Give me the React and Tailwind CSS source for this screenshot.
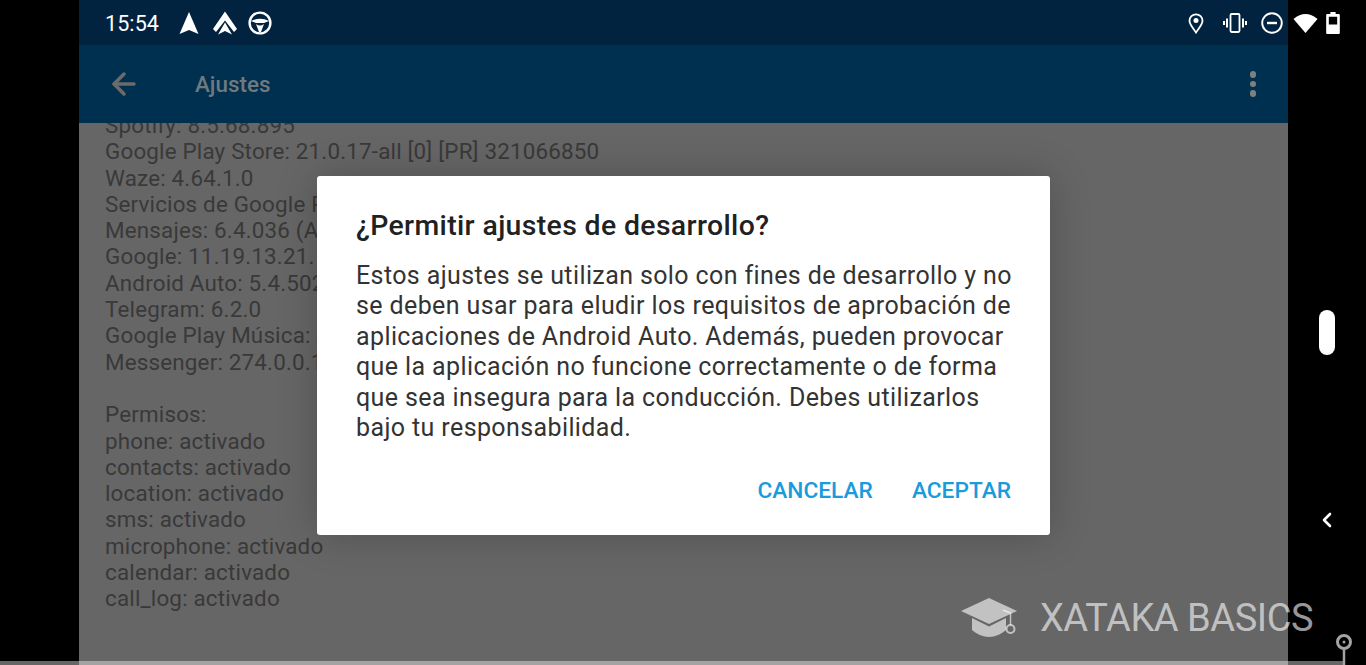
import React from 'react';
import { ArrowLeft, ChevronLeft } from 'lucide-react';

// the dialog hides the end of the longer lines, so they stop where it starts
const APPS = [
  'Spotify: 8.5.68.895',
  'Google Play Store: 21.0.17-all [0] [PR] 321066850',
  'Waze: 4.64.1.0',
  'Servicios de Google P',
  'Mensajes: 6.4.036 (A',
  'Google: 11.19.13.21.',
  'Android Auto: 5.4.502',
  'Telegram: 6.2.0',
  'Google Play Música: 4',
  'Messenger: 274.0.0.1',
];

const PERMS = ['phone', 'contacts', 'location', 'sms', 'microphone', 'calendar', 'call_log'];

function StatusLeft() {
  return (
    <div className="flex items-center">
      <span className="text-[21.5px] leading-none mt-[2px] text-white tracking-[0.1px]">15:54</span>
      <svg width="20" height="24" viewBox="0 0 20 24" className="ml-[20px]" fill="#fff">
        <path d="M10 1 L19.5 23 L10 19 L0.5 23 Z" />
      </svg>
      <svg width="24" height="24" viewBox="0 0 24 24" className="ml-[14px]" fill="#fff">
        <path d="M12 0.5 L24 18 L21 21 L12 9.5 L3 21 L0 18 Z" />
        <path d="M12 11.5 L19 23.5 L12 20 L5 23.5 Z" />
      </svg>
      <svg width="24" height="24" viewBox="0 0 24 24" className="ml-[11px]" fill="none">
        <circle cx="12" cy="12" r="10.4" stroke="#fff" strokeWidth="2.4" />
        <path d="M3 10 Q12 5.5 21 10 L16 12 H8 Z" fill="#fff" />
        <path d="M8 13 L11 21 H13 L16 13 Q12 16 8 13 Z" fill="#fff" />
      </svg>
    </div>
  );
}

function StatusRight() {
  return (
    <div className="flex items-center">
      <svg width="16" height="21" viewBox="0 0 16 21" fill="none">
        <path d="M8 19.5 C5 15 1.5 11.5 1.5 7.8 A6.5 6.5 0 0 1 14.5 7.8 C14.5 11.5 11 15 8 19.5 Z" stroke="#fff" strokeWidth="1.8" />
        <circle cx="8" cy="7.6" r="2.5" fill="#fff" />
      </svg>
      <svg width="24" height="20" viewBox="0 0 24 20" className="ml-[19px]" fill="none">
        <rect x="7.5" y="1" width="9" height="18" rx="1.2" stroke="#fff" strokeWidth="1.8" />
        <path d="M4 5.5 V14.5 M1 8 V12 M20 5.5 V14.5 M23 8 V12" stroke="#fff" strokeWidth="2" />
      </svg>
      <svg width="22" height="22" viewBox="0 0 22 22" className="ml-[14px]" fill="none">
        <circle cx="11" cy="11" r="9.8" stroke="#fff" strokeWidth="1.9" />
        <path d="M6 11 H16" stroke="#fff" strokeWidth="2.4" />
      </svg>
      <svg width="25" height="22" viewBox="0 0 25 22" className="ml-[10px]" fill="#fff">
        <path d="M12.5 21 L0.5 7 Q12.5 -3 24.5 7 Z" />
      </svg>
      <svg width="14" height="22" viewBox="0 0 13 21" className="ml-[8px]" fill="#fff">
        <path fillRule="evenodd" d="M4 0 H9 V2 H12 A1 1 0 0 1 13 3 V20 A1 1 0 0 1 12 21 H1 A1 1 0 0 1 0 20 V3 A1 1 0 0 1 1 2 H4 Z M2.5 4.5 V12 H10.5 V4.5 Z" />
      </svg>
    </div>
  );
}

function Watermark() {
  return (
    <div className="flex items-center text-white/60">
      <svg width="58" height="42" viewBox="0 0 58 42" fill="#ffffff" fillOpacity="0.6">
        <path d="M29 1 L57 14 L29 27 L1 14 Z" />
        <path d="M12 21 L29 29.5 L46 21 V33 Q38 40 29 40 Q20 40 12 33 Z" />
        <path d="M43 13 L50.5 16 V28" stroke="#ffffff" strokeOpacity="0.6" strokeWidth="1.5" fill="none" />
        <circle cx="50.5" cy="32" r="4" fill="none" stroke="#ffffff" strokeOpacity="0.6" strokeWidth="2" />
      </svg>
      <span className="ml-[22px] text-[38px] leading-none tracking-[-0.45px] font-['Roboto',sans-serif]">XATAKA BASICS</span>
    </div>
  );
}

export default function App() {
  return (
    <div className="relative flex h-[665px] w-[1366px] overflow-hidden bg-black font-['Roboto',sans-serif]">
      <div className="w-[79px] shrink-0" />

      <div className="flex w-[1209px] shrink-0 flex-col bg-[#666666]">
        <div className="flex h-[45px] shrink-0 items-center bg-[#012340] pl-[26px]">
          <StatusLeft />
        </div>
        <div className="flex h-[78px] shrink-0 items-center bg-[#00304f] pl-[28px] pr-[32px]">
          <ArrowLeft size={34} strokeWidth={2.5} className="text-[#6b6b6b]" />
          <span className="ml-[54px] mt-[2px] text-[22.4px] font-medium text-[#6f7a80]">Ajustes</span>
          <div className="ml-auto flex flex-col gap-[3px]">
            <div className="h-[6.5px] w-[6.5px] rounded-full bg-[#7f7f7f]" />
            <div className="h-[6.5px] w-[6.5px] rounded-full bg-[#7f7f7f]" />
            <div className="h-[6.5px] w-[6.5px] rounded-full bg-[#7f7f7f]" />
          </div>
        </div>
        <div className="flex-1 overflow-hidden pl-[26px] text-[22.4px] leading-[26.3px] tracking-[0.18px] text-[#393939]">
          <div className="-mt-[11px]">
            {APPS.map((line) => (
              <div key={line} className="whitespace-nowrap">{line}</div>
            ))}
            <div className="h-[26.3px]" />
            <div>Permisos:</div>
            {PERMS.map((p) => (
              <div key={p}>{p}: activado</div>
            ))}
          </div>
        </div>
      </div>

      <div className="flex-1" />

      {/* dialog sits over the dimmed page */}
      <div className="absolute left-[317px] top-[176px] h-[359px] w-[733px] rounded-[3px] bg-white px-[39px] pt-[33px] shadow-[0_0_40px_rgba(0,0,0,0.22)]">
        <div className="whitespace-nowrap text-[28.4px] leading-[34px] tracking-[0.37px] font-medium text-[#212121]">¿Permitir ajustes de desarrollo?</div>
        <div className="mt-[18px] text-[25px] leading-[30.4px] tracking-[0.39px] text-[#333333]">
          <div className="whitespace-nowrap">Estos ajustes se utilizan solo con fines de desarrollo y no</div>
          <div className="whitespace-nowrap">se deben usar para eludir los requisitos de aprobación de</div>
          <div className="whitespace-nowrap">aplicaciones de Android Auto. Además, pueden provocar</div>
          <div className="whitespace-nowrap">que la aplicación no funcione correctamente o de forma</div>
          <div className="whitespace-nowrap">que sea insegura para la conducción. Debes utilizarlos</div>
          <div className="whitespace-nowrap">bajo tu responsabilidad.</div>
        </div>
        <div className="mt-[34px] flex justify-end gap-[39px] text-[22.7px] leading-[28px] font-medium text-[#1a9bdc]">
          <span>CANCELAR</span>
          <span>ACEPTAR</span>
        </div>
      </div>

      {/* status icons on the right run over the black strip */}
      <div className="absolute left-[1188px] top-[12px]">
        <StatusRight />
      </div>

      <div className="absolute left-[1319px] top-[310px] h-[45px] w-[16px] rounded-full bg-white" />
      <ChevronLeft size={24} strokeWidth={2.6} className="absolute left-[1315px] top-[508px] text-white" />

      <div className="absolute left-[960px] top-[597px]">
        <Watermark />
      </div>

      {/* bottom line of the watermark with the pin */}
      <div className="absolute bottom-0 left-0 h-[4px] w-[1345px] bg-white/40" />
      <svg width="20" height="34" viewBox="0 0 20 34" className="absolute left-[1334px] top-[631px]" fill="none">
        <circle cx="10" cy="11" r="6.5" stroke="#a3a3a3" strokeWidth="3" />
        <circle cx="10" cy="11" r="1.5" fill="#a3a3a3" />
        <path d="M10 18 V34" stroke="#a3a3a3" strokeWidth="2.5" />
      </svg>
    </div>
  );
}
